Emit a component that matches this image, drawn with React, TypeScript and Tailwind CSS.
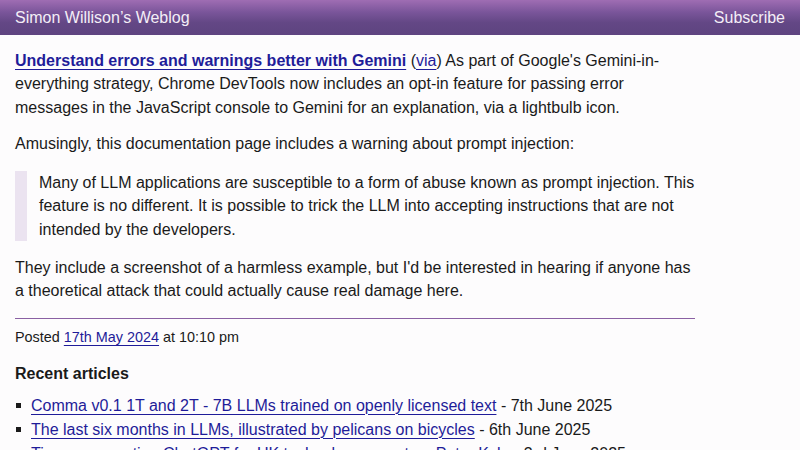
import React from "react";

export default function App() {
  const linkCls = "text-[#1f1c99] underline decoration-1 underline-offset-[3px]";
  return (
    <div className="min-h-[450px] bg-[#fdfcfd] text-[#1a1a1a]" style={{ fontFamily: '"Liberation Sans", Arial, sans-serif' }}>
      <header className="h-[35px] flex items-center justify-between px-[15px] bg-[linear-gradient(to_bottom,#9f6db3_0%,#7a559a_35%,#634785_65%,#5e4480_100%)] text-[#f4eef7] text-[16px]">
        <span>Simon Willison’s Weblog</span>
        <span>Subscribe</span>
      </header>
      <main className="px-[15px] w-[710px]">
        <p className="mt-[14px] text-[16px] leading-[23.3px]">
          <a className={"font-bold " + linkCls}>Understand errors and warnings better with Gemini</a>{" "}
          (<a className={linkCls}>via</a>) As part of Google's Gemini-in-everything strategy, Chrome DevTools now includes an opt-in feature for passing error messages in the JavaScript console to Gemini for an explanation, via a lightbulb icon.
        </p>
        <p className="mt-[13px] text-[16px] leading-[23.3px]">
          Amusingly, this documentation page includes a warning about prompt injection:
        </p>
        <blockquote className="mt-[16px] border-l-[12px] border-[#ebe3f0] pl-[12px] text-[16px] leading-[23.3px]">
          Many of LLM applications are susceptible to a form of abuse known as prompt injection. This feature is no different. It is possible to trick the LLM into accepting instructions that are not intended by the developers.
        </blockquote>
        <p className="mt-[15px] text-[16px] leading-[23.3px]">
          They include a screenshot of a harmless example, but I'd be interested in hearing if anyone has a theoretical attack that could actually cause real damage here.
        </p>
        <div className="w-[680px] h-px bg-[#8a60a3] mt-[15px]" />
        <p className="mt-[8px] text-[14.4px] leading-[20px]">
          Posted <a className={linkCls}>17th May 2024</a> at 10:10 pm
        </p>
        <h2 className="mt-[17px] text-[16px] font-bold leading-[20px]">Recent articles</h2>
        <ul className="mt-[10px] text-[16px] leading-[24px]">
          {[
            ["Comma v0.1 1T and 2T - 7B LLMs trained on openly licensed text", "7th June 2025"],
            ["The last six months in LLMs, illustrated by pelicans on bicycles", "6th June 2025"],
            ["Tips on prompting ChatGPT for UK technology secretary Peter Kyle", "3rd June 2025"],
          ].map(([t, d]) => (
            <li key={t} className="flex items-center">
              <span className="w-[5px] h-[5px] bg-[#1a1a1a] ml-[1px] mr-[10px] shrink-0" />
              <span>
                <a className={linkCls}>{t}</a> - {d}
              </span>
            </li>
          ))}
        </ul>
      </main>
    </div>
  );
}
